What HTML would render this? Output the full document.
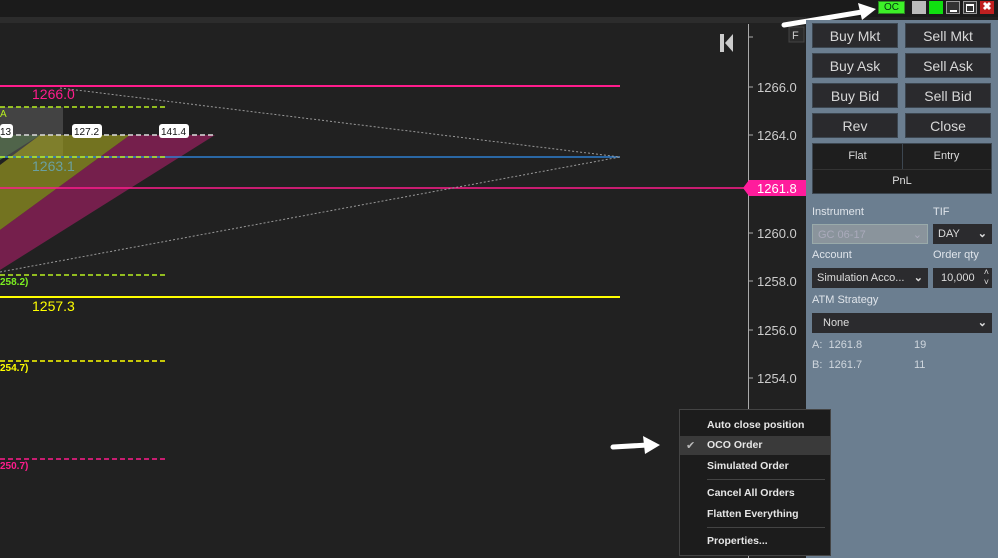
<!DOCTYPE html>
<html><head><meta charset="utf-8"><style>
body{margin:0;width:998px;height:558px;overflow:hidden;background:#212121;font-family:"Liberation Sans",sans-serif;position:relative}
.a{position:absolute}
.btn{position:absolute;width:86px;height:25px;background:#2a2a2d;border:1px solid #3c4650;color:#d8d8d8;font-size:14px;line-height:25px;text-align:center;box-sizing:border-box}
.lbl{position:absolute;color:#dfe4ea;font-size:11px}
.sel{position:absolute;background:#2b2b2e;color:#ddd;font-size:11px;line-height:20px;height:20px;box-sizing:border-box;padding-left:5px}
.mi{position:absolute;left:707px;color:#e6e6e6;font-size:10.5px;font-weight:bold}
</style></head><body>
<div class="a" style="left:0;top:0;width:998px;height:17px;background:#1b1b1b"></div>
<div class="a" style="left:0;top:17px;width:806px;height:6px;background:#2c2c2c"></div>
<svg class="a" style="left:0;top:0" width="998" height="558">
<polygon points="0,160 40,135 0,135" fill="#4c8a3a" opacity=".8"/>
<rect x="0" y="107" width="63" height="50" fill="#5a5a5a" opacity=".6"/>
<polygon points="0,230 130,135 40,135 0,165" fill="#a0a020" opacity=".65"/>
<polygon points="0,270 215,135 130,135 0,230" fill="#9a2060" opacity=".7"/>
<line x1="0" y1="86" x2="620" y2="86" stroke="#ff1c8c" stroke-width="2"/>
<line x1="0" y1="157" x2="620" y2="157" stroke="#2e7fd0" stroke-width="1.5"/>
<line x1="0" y1="188" x2="745" y2="188" stroke="#ff1c8c" stroke-width="1.5"/>
<line x1="0" y1="297" x2="620" y2="297" stroke="#ffff00" stroke-width="2"/>
<line x1="60" y1="88" x2="620" y2="157" stroke="#999" stroke-dasharray="2,2"/>
<line x1="0" y1="272" x2="620" y2="157" stroke="#999" stroke-dasharray="2,2"/>
<line x1="0" y1="107" x2="167" y2="107" stroke="#b8f020" stroke-width="1.5" stroke-dasharray="5,3"/>
<line x1="0" y1="135" x2="216" y2="135" stroke="#ddd" stroke-width="1.5" stroke-dasharray="5,3"/>
<line x1="0" y1="157" x2="167" y2="157" stroke="#b8f020" stroke-width="1.5" stroke-dasharray="5,3"/>
<line x1="0" y1="275" x2="167" y2="275" stroke="#b8f020" stroke-width="1.5" stroke-dasharray="5,3"/>
<line x1="0" y1="361" x2="167" y2="361" stroke="#ffff00" stroke-width="1.5" stroke-dasharray="5,3"/>
<line x1="0" y1="459" x2="167" y2="459" stroke="#ff1c8c" stroke-width="1.5" stroke-dasharray="5,3"/>
<rect x="0" y="124" width="13" height="14" rx="3" fill="#fff"/>
<rect x="72" y="124" width="30" height="14" rx="3" fill="#fff"/>
<rect x="159" y="124" width="30" height="14" rx="3" fill="#fff"/>
<g font-family="Liberation Sans" font-size="10" fill="#111"><text x="0" y="135">13</text><text x="74" y="135">127.2</text><text x="161" y="135">141.4</text></g>
<text x="0" y="117" font-size="10" fill="#b8f020" font-family="Liberation Sans">A</text>
<g font-family="Liberation Sans" font-size="14"><text x="32" y="99" fill="#ff1c8c">1266.0</text><text x="32" y="171" fill="#6aa0a0">1263.1</text><text x="32" y="311" fill="#ffff00">1257.3</text></g>
<g font-family="Liberation Sans" font-size="10" font-weight="bold"><text x="0" y="285" fill="#7cf020">258.2)</text><text x="0" y="371" fill="#ffff00">254.7)</text><text x="0" y="469" fill="#ff1c8c">250.7)</text></g>
<line x1="748.5" y1="24" x2="748.5" y2="558" stroke="#aaa"/>
<g stroke="#aaa"><line x1="748" y1="37" x2="753" y2="37"/><line x1="748" y1="87" x2="753" y2="87"/><line x1="748" y1="135" x2="753" y2="135"/><line x1="748" y1="233" x2="753" y2="233"/><line x1="748" y1="281" x2="753" y2="281"/><line x1="748" y1="330" x2="753" y2="330"/><line x1="748" y1="378" x2="753" y2="378"/></g>
<g font-family="Liberation Sans" font-size="13" fill="#ccc"><text x="757" y="92">1266.0</text><text x="757" y="140">1264.0</text><text x="757" y="238">1260.0</text><text x="757" y="286">1258.0</text><text x="757" y="335">1256.0</text><text x="757" y="383">1254.0</text></g>
<polygon points="743,188 749,180 806,180 806,196 749,196" fill="#ff1c9c"/>
<text x="757" y="193" font-family="Liberation Sans" font-size="13" fill="#fff">1261.8</text>
<rect x="720" y="34" width="4" height="18" fill="#ccc"/><polygon points="733,34 733,52 725,43" fill="#ccc"/>
<rect x="789" y="27" width="15" height="15" fill="#2a2a2a" stroke="#444"/><text x="792" y="39" font-family="Liberation Sans" font-size="11" fill="#ccc">F</text>
<path d="M784,25 L862,12" stroke="#fff" stroke-width="5" stroke-linecap="round"/><polygon points="858,3 876,9 862,20" fill="#fff"/>
<path d="M613,447 L648,445" stroke="#fff" stroke-width="5" stroke-linecap="round"/><polygon points="643,436 660,445 645,454" fill="#fff"/>
</svg>
<div class="a" style="left:878px;top:1px;width:27px;height:13px;background:#3df028;border:1px solid #2a8a20;color:#031;font-size:10px;text-align:center;line-height:12px;box-sizing:border-box">OC</div>
<div class="a" style="left:912px;top:1px;width:14px;height:13px;background:#bbb"></div>
<div class="a" style="left:929px;top:1px;width:14px;height:13px;background:#10e010"></div>
<div class="a" style="left:946px;top:1px;width:14px;height:13px;background:#333;border:1px solid #999;box-sizing:border-box"><div class="a" style="left:3px;top:8px;width:7px;height:2px;background:#fff"></div></div>
<div class="a" style="left:963px;top:1px;width:14px;height:13px;background:#333;border:1px solid #999;box-sizing:border-box"><div class="a" style="left:2px;top:2px;width:6px;height:5px;border:1px solid #fff;border-top-width:2px"></div></div>
<div class="a" style="left:980px;top:1px;width:14px;height:13px;background:#c02020;color:#fff;font-size:11px;font-weight:bold;text-align:center;line-height:13px">✖</div>
<div class="a" style="left:806px;top:20px;width:192px;height:538px;background:#6b7e90"></div>
<div class="btn" style="left:812px;top:23px">Buy Mkt</div><div class="btn" style="left:905px;top:23px">Sell Mkt</div>
<div class="btn" style="left:812px;top:53px">Buy Ask</div><div class="btn" style="left:905px;top:53px">Sell Ask</div>
<div class="btn" style="left:812px;top:83px">Buy Bid</div><div class="btn" style="left:905px;top:83px">Sell Bid</div>
<div class="btn" style="left:812px;top:113px">Rev</div><div class="btn" style="left:905px;top:113px">Close</div>
<div class="a" style="left:812px;top:143px;width:180px;height:51px;background:#1e1e1e;border:1px solid #3c4650;box-sizing:border-box;color:#ddd;font-size:11px">
<div class="a" style="left:0;top:0;width:89px;height:25px;line-height:25px;text-align:center;border-right:1px solid #3c4650;border-bottom:1px solid #333">Flat</div>
<div class="a" style="left:89px;top:0;width:89px;height:25px;line-height:25px;text-align:center;border-bottom:1px solid #333">Entry</div>
<div class="a" style="left:0;top:25px;width:178px;height:25px;line-height:25px;text-align:center">PnL</div></div>
<div class="lbl" style="left:812px;top:206px">Instrument</div><div class="lbl" style="left:933px;top:206px">TIF</div>
<div class="sel" style="left:812px;top:224px;width:116px;background:#8a949c;color:#aab;border:1px solid #9aa">GC 06-17<span style="position:absolute;right:5px">⌄</span></div>
<div class="sel" style="left:933px;top:224px;width:59px">DAY<span style="position:absolute;right:5px;font-weight:bold">⌄</span></div>
<div class="lbl" style="left:812px;top:249px">Account</div><div class="lbl" style="left:933px;top:249px">Order qty</div>
<div class="sel" style="left:812px;top:268px;width:116px">Simulation Acco...<span style="position:absolute;right:5px;font-weight:bold">⌄</span></div>
<div class="sel" style="left:933px;top:268px;width:59px;padding-left:8px">10,000<span style="position:absolute;right:3px;top:-1px;font-size:9px;line-height:10px">˄<br>˅</span></div>
<div class="lbl" style="left:812px;top:294px">ATM Strategy</div>
<div class="sel" style="left:812px;top:313px;width:180px;padding-left:11px">None<span style="position:absolute;right:5px;font-weight:bold">⌄</span></div>
<div class="lbl" style="left:812px;top:339px;color:#cfd6dd">A:&nbsp; 1261.8</div><div class="lbl" style="left:914px;top:339px;color:#cfd6dd">19</div>
<div class="lbl" style="left:812px;top:359px;color:#cfd6dd">B:&nbsp; 1261.7</div><div class="lbl" style="left:914px;top:359px;color:#cfd6dd">11</div>
<div class="a" style="left:679px;top:409px;width:152px;height:147px;background:#1c1c1c;border:1px solid #444;box-sizing:border-box"></div>
<div class="a" style="left:680px;top:436px;width:150px;height:19px;background:#3a3a3a"></div>
<div class="mi" style="top:419px">Auto close position</div>
<div class="a" style="left:686px;top:439px;color:#bbb;font-size:11px">✔</div>
<div class="mi" style="top:439px">OCO Order</div>
<div class="mi" style="top:460px">Simulated Order</div>
<div class="a" style="left:707px;top:479px;width:118px;height:1px;background:#444"></div>
<div class="mi" style="top:487px">Cancel All Orders</div>
<div class="mi" style="top:508px">Flatten Everything</div>
<div class="a" style="left:707px;top:527px;width:118px;height:1px;background:#444"></div>
<div class="mi" style="top:535px">Properties...</div>
</body></html>
